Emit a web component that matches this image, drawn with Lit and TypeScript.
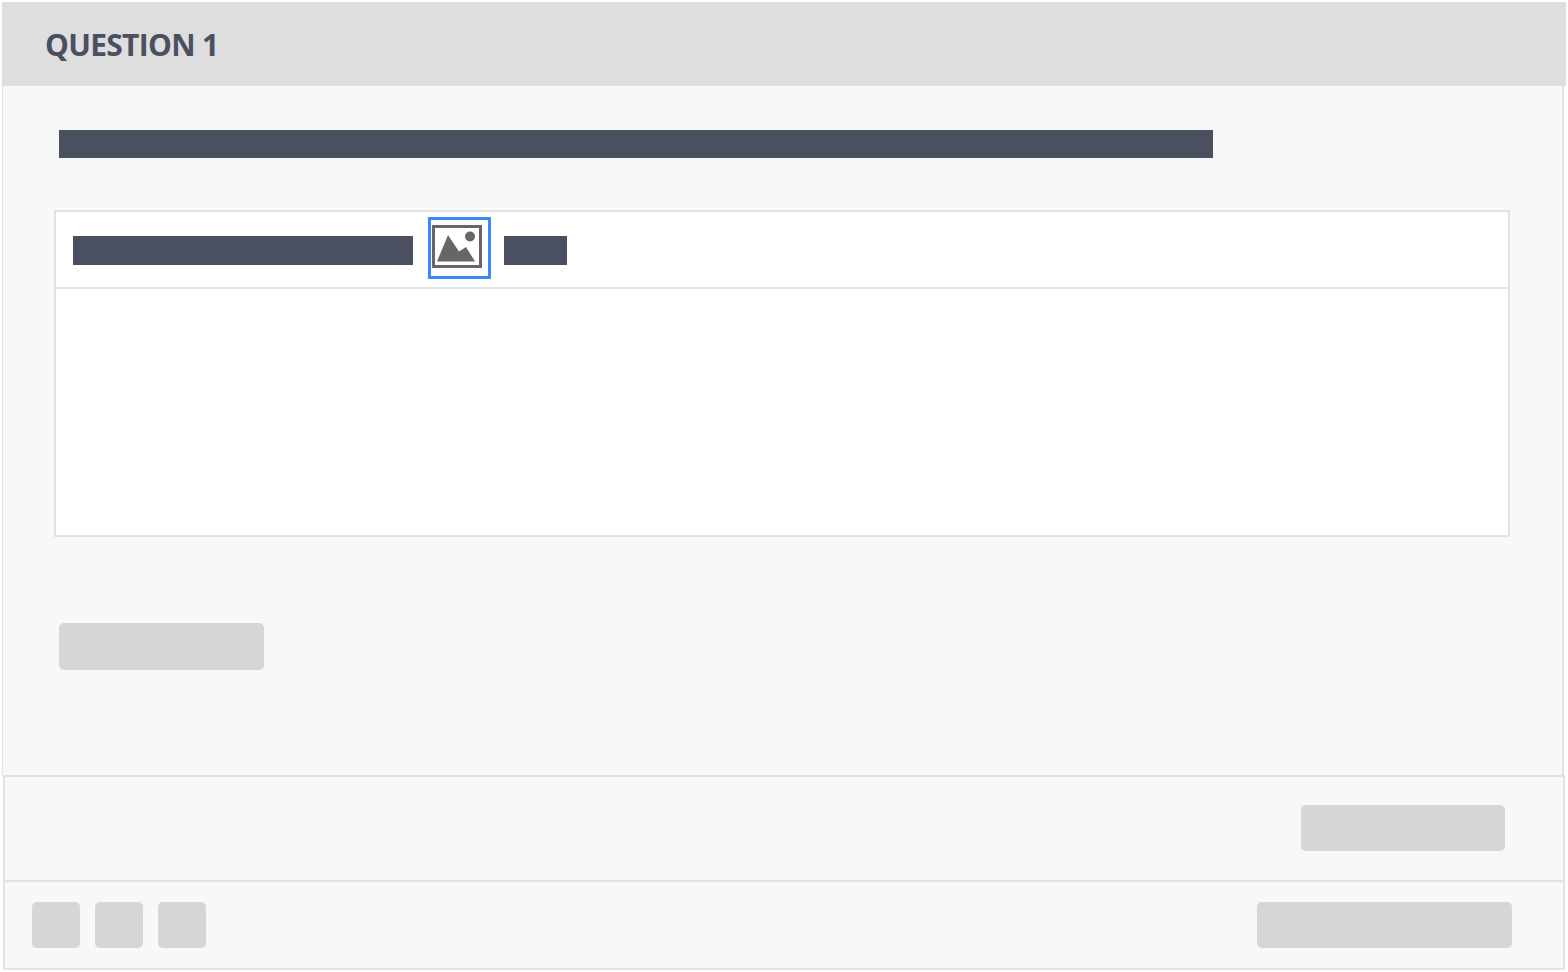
import { LitElement, html, css } from 'lit';
import { customElement } from 'lit/decorators.js';

@customElement('app-root')
export class AppRoot extends LitElement {
  static styles = css`
    :host {
      display: block;
      width: 1568px;
      height: 972px;
      background: #fff;
      overflow: hidden;
      box-sizing: border-box;
      padding-top: 2px;
    }

    .header {
      box-sizing: border-box;
      width: 1564px;
      height: 84px;
      margin-left: 2px;
      padding-left: 43px;
      display: flex;
      align-items: center;
      background: #dedede;
      color: #4a5060;
      font-family: 'Open Sans', sans-serif;
      font-size: 30px;
      font-weight: 700;
      letter-spacing: -0.7px;
    }

    .panel {
      box-sizing: border-box;
      width: 1562px;
      height: 689px;
      margin-left: 2px;
      padding: 44px 0 0 52px;
      background: #f7f8fa;
      border-left: 1px solid #e2e2e2;
      border-right: 2px solid #e2e2e2;
    }

    .bar {
      background: #4a5060;
      flex: none;
    }

    .title {
      width: 1154px;
      height: 28px;
      margin-left: 4px;
    }

    .card {
      box-sizing: border-box;
      width: 1456px;
      height: 327px;
      margin: 52px 0 0 -1px;
      background: #fff;
      border: 2px solid #e2e2e2;
    }

    .card-top {
      box-sizing: border-box;
      height: 77px;
      padding: 5px 0 0 17px;
      display: flex;
      align-items: flex-start;
      border-bottom: 2px solid #e2e2e2;
    }

    .card-top .bar {
      height: 29px;
      margin-top: 19px;
    }

    .picture {
      box-sizing: border-box;
      width: 63px;
      height: 62px;
      margin: 0 13px 0 15px;
      border: 3px solid #3b87ff;
      flex: none;
    }

    .picture svg {
      display: block;
    }

    .action {
      background: #d6d6d6;
      border-radius: 5px;
      flex: none;
    }

    .add {
      width: 205px;
      height: 47px;
      margin: 86px 0 0 4px;
    }

    .footer {
      box-sizing: border-box;
      width: 1562px;
      height: 195px;
      margin-left: 3px;
      background: #f7f8fa;
      border: 2px solid #e2e2e2;
    }

    .footer-top {
      box-sizing: border-box;
      height: 105px;
      padding: 28px 58px 0 0;
      display: flex;
      justify-content: flex-end;
      border-bottom: 2px solid #e2e2e2;
    }

    .footer-top .action {
      width: 204px;
      height: 46px;
    }

    .footer-bottom {
      display: flex;
      gap: 15px;
      padding: 20px 51px 0 27px;
    }

    .square {
      width: 48px;
      height: 46px;
    }

    .wide {
      width: 255px;
      height: 46px;
      margin-left: auto;
    }
  `;

  render() {
    return html`
      <div class="header">QUESTION 1</div>
      <div class="panel">
        <div class="bar title"></div>
        <div class="card">
          <div class="card-top">
            <div class="bar" style="width: 340px"></div>
            <div class="picture">
              <svg width="57" height="56" viewBox="0 0 57 56">
                <rect x="2.5" y="6.5" width="47" height="40" fill="#fff" stroke="#666" stroke-width="3" />
                <circle cx="39" cy="16.5" r="5" fill="#666" />
                <path d="M6 41.5 L17 15 L28 31.5 L35 27 L44 41.5 Z" fill="#666" />
              </svg>
            </div>
            <div class="bar" style="width: 63px"></div>
          </div>
        </div>
        <div class="action add"></div>
      </div>
      <div class="footer">
        <div class="footer-top">
          <div class="action"></div>
        </div>
        <div class="footer-bottom">
          <div class="action square"></div>
          <div class="action square"></div>
          <div class="action square"></div>
          <div class="action wide"></div>
        </div>
      </div>
    `;
  }
}
